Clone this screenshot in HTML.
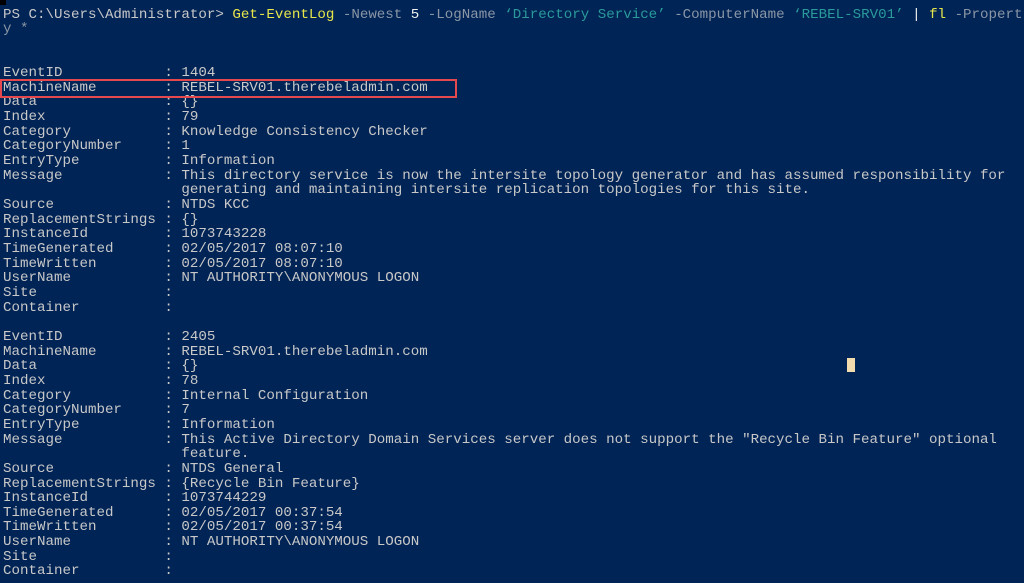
<!DOCTYPE html>
<html><head><meta charset="utf-8"><style>
html,body{margin:0;padding:0;background:#012456;width:1024px;height:583px;overflow:hidden}
pre{position:absolute;left:3px;top:7.5px;margin:0;font-family:"Liberation Mono",monospace;font-size:14.17px;line-height:14.65px;color:#c8c8c8;white-space:pre}
.y{color:#e6e64a}.p{color:#8a96a6}.s{color:#2a9a9a}.w{color:#f0f0f0}
.box{position:absolute;left:0;top:79px;width:453px;height:15px;border:2px solid #e5484d}
.cur{position:absolute;left:847px;top:358px;width:8px;height:14px;background:#f2dcae}
.blk{position:absolute;left:0;top:0;width:6px;height:5px;background:#000}
</style></head><body>
<div class="blk"></div>
<pre>PS C:\Users\Administrator&gt; <span class="y">Get-EventLog</span> <span class="p">-Newest</span> <span class="w">5</span> <span class="p">-LogName</span> <span class="s">‘Directory Service’</span> <span class="p">-ComputerName</span> <span class="s">‘REBEL-SRV01’</span> <span class="w">|</span> <span class="y">fl</span> <span class="p">-Propert</span>
<span class="p">y *</span>


EventID            : 1404
MachineName        : REBEL-SRV01.therebeladmin.com
Data               : {}
Index              : 79
Category           : Knowledge Consistency Checker
CategoryNumber     : 1
EntryType          : Information
Message            : This directory service is now the intersite topology generator and has assumed responsibility for
                     generating and maintaining intersite replication topologies for this site.
Source             : NTDS KCC
ReplacementStrings : {}
InstanceId         : 1073743228
TimeGenerated      : 02/05/2017 08:07:10
TimeWritten        : 02/05/2017 08:07:10
UserName           : NT AUTHORITY\ANONYMOUS LOGON
Site               :
Container          :

EventID            : 2405
MachineName        : REBEL-SRV01.therebeladmin.com
Data               : {}
Index              : 78
Category           : Internal Configuration
CategoryNumber     : 7
EntryType          : Information
Message            : This Active Directory Domain Services server does not support the "Recycle Bin Feature" optional
                     feature.
Source             : NTDS General
ReplacementStrings : {Recycle Bin Feature}
InstanceId         : 1073744229
TimeGenerated      : 02/05/2017 00:37:54
TimeWritten        : 02/05/2017 00:37:54
UserName           : NT AUTHORITY\ANONYMOUS LOGON
Site               :
Container          :</pre>
<div class="box"></div>
<div class="cur"></div>
</body></html>
